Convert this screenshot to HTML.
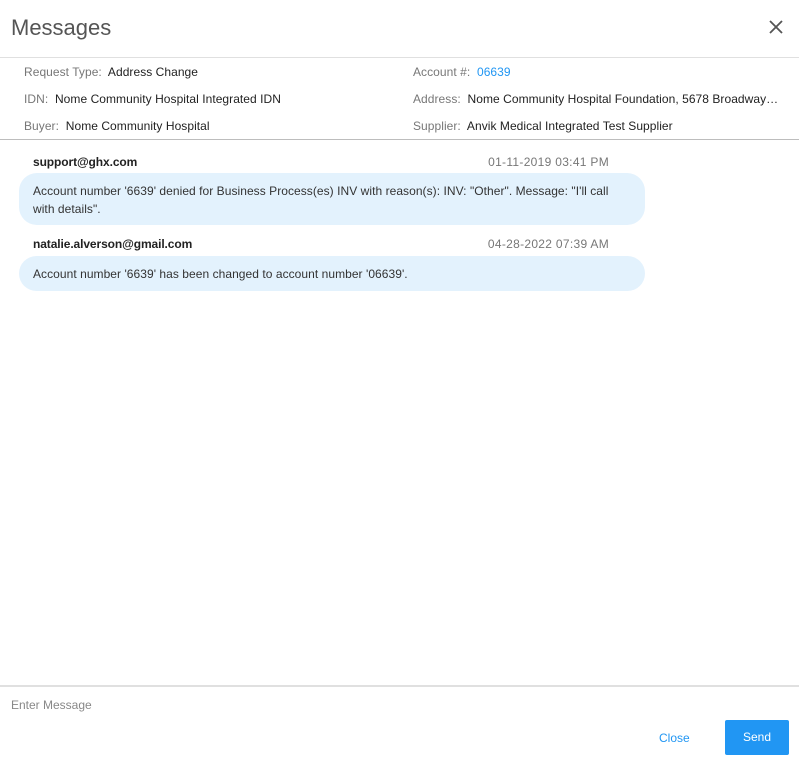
<!DOCTYPE html>
<html><head><style>
*{margin:0;padding:0;box-sizing:border-box}
body{width:799px;height:768px;background:#fff;font-family:"Liberation Sans",Arial,sans-serif;position:relative;overflow:hidden;color:#222}
.a{position:absolute;white-space:nowrap}
.t{left:11px;top:15px;font-size:22px;color:#555}
.x{left:767px;top:18px}
.hr1{position:absolute;left:0;top:57px;width:799px;height:1px;background:#e0e0e0}
.hr2{position:absolute;left:0;top:139px;width:799px;height:1px;background:#bdbdbd}
.hr3{position:absolute;left:0;top:685px;width:799px;height:2px;background:#e0e0e0}
.r{font-size:12px;letter-spacing:0.05px}
.l{color:#777}
.s{font-size:12px;font-weight:bold;letter-spacing:-0.1px;left:33px}
.d{font-size:12px;color:#777;right:190px;letter-spacing:0.3px}
.b{position:absolute;left:19px;width:626px;background:#e3f2fd;border-radius:18px;font-size:12px;padding:9px 14px;line-height:18px;letter-spacing:0.05px;color:#333}
</style></head><body>
<div class="a t">Messages</div>
<svg class="a x" width="18" height="18" viewBox="0 0 18 18"><path d="M3 3L15 15M15 3L3 15" stroke="#555" stroke-width="1.8"/></svg>
<div class="hr1"></div>
<div class="a r" style="left:24px;top:65px"><span class="l">Request Type:</span>&nbsp; Address Change</div>
<div class="a r" style="left:24px;top:92px"><span class="l">IDN:</span>&nbsp; Nome Community Hospital Integrated IDN</div>
<div class="a r" style="left:24px;top:119px"><span class="l">Buyer:</span>&nbsp; Nome Community Hospital</div>
<div class="a r" style="left:413px;top:65px"><span class="l">Account #:</span>&nbsp; <span style="color:#2196f3">06639</span></div>
<div class="a r" style="left:413px;top:92px"><span class="l">Address:</span>&nbsp; Nome Community Hospital Foundation, 5678 Broadway…</div>
<div class="a r" style="left:413px;top:119px"><span class="l">Supplier:</span>&nbsp; Anvik Medical Integrated Test Supplier</div>
<div class="hr2"></div>
<div class="a s" style="top:155px">support@ghx.com</div>
<div class="a d" style="top:155px">01-11-2019 03:41 PM</div>
<div class="b" style="top:173px;height:52px">Account number '6639' denied for Business Process(es) INV with reason(s): INV: "Other". Message: "I'll call with details".</div>
<div class="a s" style="top:237px">natalie.alverson@gmail.com</div>
<div class="a d" style="top:237px">04-28-2022 07:39 AM</div>
<div class="b" style="top:256px;height:35px">Account number '6639' has been changed to account number '06639'.</div>
<div class="hr3"></div>
<div class="a" style="left:11px;top:698px;font-size:12px;color:#888">Enter Message</div>
<div class="a" style="left:659px;top:731px;font-size:12px;color:#2196f3">Close</div>
<div class="a" style="left:725px;top:720px;width:64px;height:35px;background:#2196f3;border-radius:2px;color:#fff;font-size:12px;text-align:center;line-height:35px">Send</div>
</body></html>
